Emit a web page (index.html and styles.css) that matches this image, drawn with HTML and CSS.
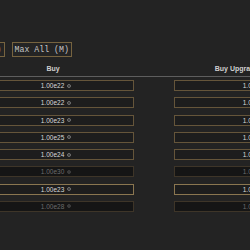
FILE: index.html
```html
<!DOCTYPE html>
<html lang="en">
<head>
  <meta charset="UTF-8">
  <title>Buyables</title>
  <link rel="stylesheet" href="styles.css">
</head>
<body>
  <div class="toolbar">
    <button class="btn first">Toggle (T)</button>
    <button class="btn">Max All (M)</button>
  </div>

  <div class="table">
    <div class="thead">
      <div class="th">Buy</div>
      <div class="th">Buy Upgrades Until Max</div>
    </div>
    <div class="tbody">
      <div class="cell"><span>1.00e22</span><svg class="coin" viewBox="0 0 4 4"><circle cx="2" cy="2" r="1.5"/><circle class="dot" cx="2" cy="2" r="0.5"/></svg></div>
      <div class="cell"><span>1.00e22</span><svg class="coin" viewBox="0 0 4 4"><circle cx="2" cy="2" r="1.5"/><circle class="dot" cx="2" cy="2" r="0.5"/></svg></div>

      <div class="cell"><span>1.00e22</span><svg class="coin" viewBox="0 0 4 4"><circle cx="2" cy="2" r="1.5"/><circle class="dot" cx="2" cy="2" r="0.5"/></svg></div>
      <div class="cell"><span>1.00e22</span><svg class="coin" viewBox="0 0 4 4"><circle cx="2" cy="2" r="1.5"/><circle class="dot" cx="2" cy="2" r="0.5"/></svg></div>

      <div class="cell"><span>1.00e23</span><svg class="coin" viewBox="0 0 4 4"><circle cx="2" cy="2" r="1.5"/><circle class="dot" cx="2" cy="2" r="0.5"/></svg></div>
      <div class="cell"><span>1.00e23</span><svg class="coin" viewBox="0 0 4 4"><circle cx="2" cy="2" r="1.5"/><circle class="dot" cx="2" cy="2" r="0.5"/></svg></div>

      <div class="cell"><span>1.00e25</span><svg class="coin" viewBox="0 0 4 4"><circle cx="2" cy="2" r="1.5"/><circle class="dot" cx="2" cy="2" r="0.5"/></svg></div>
      <div class="cell"><span>1.00e25</span><svg class="coin" viewBox="0 0 4 4"><circle cx="2" cy="2" r="1.5"/><circle class="dot" cx="2" cy="2" r="0.5"/></svg></div>

      <div class="cell"><span>1.00e24</span><svg class="coin" viewBox="0 0 4 4"><circle cx="2" cy="2" r="1.5"/><circle class="dot" cx="2" cy="2" r="0.5"/></svg></div>
      <div class="cell"><span>1.00e24</span><svg class="coin" viewBox="0 0 4 4"><circle cx="2" cy="2" r="1.5"/><circle class="dot" cx="2" cy="2" r="0.5"/></svg></div>

      <div class="cell locked"><span>1.00e30</span><svg class="coin" viewBox="0 0 4 4"><circle cx="2" cy="2" r="1.5"/><circle class="dot" cx="2" cy="2" r="0.5"/></svg></div>
      <div class="cell locked"><span>1.00e30</span><svg class="coin" viewBox="0 0 4 4"><circle cx="2" cy="2" r="1.5"/><circle class="dot" cx="2" cy="2" r="0.5"/></svg></div>

      <div class="cell active"><span>1.00e23</span><svg class="coin" viewBox="0 0 4 4"><circle cx="2" cy="2" r="1.5"/><circle class="dot" cx="2" cy="2" r="0.5"/></svg></div>
      <div class="cell active"><span>1.00e23</span><svg class="coin" viewBox="0 0 4 4"><circle cx="2" cy="2" r="1.5"/><circle class="dot" cx="2" cy="2" r="0.5"/></svg></div>

      <div class="cell locked"><span>1.00e28</span><svg class="coin" viewBox="0 0 4 4"><circle cx="2" cy="2" r="1.5"/><circle class="dot" cx="2" cy="2" r="0.5"/></svg></div>
      <div class="cell locked"><span>1.00e28</span><svg class="coin" viewBox="0 0 4 4"><circle cx="2" cy="2" r="1.5"/><circle class="dot" cx="2" cy="2" r="0.5"/></svg></div>
    </div>
  </div>
</body>
</html>
```

FILE: styles.css
```css
html, body { margin: 0; background: #232323; overflow: hidden; }
body { font-family: "Liberation Sans", Arial, sans-serif; color: #d6d6d6; }

.toolbar { display: flex; gap: 7px; margin: 42px 0 0 -51px; }
.btn { font-family: "Liberation Mono", "Courier New", monospace; font-size: 8.25px; line-height: 13px; height: 15px;
       padding: 0 2px; color: #c6c6c6; background: #242424; border: 1px solid #76633f; border-radius: 0; white-space: nowrap; }

.table { margin-left: -28px; width: 420px; }
.thead { display: grid; grid-template-columns: 162px 162px; column-gap: 40px; padding: 7px 0 3px; border-bottom: 1px solid #5e5e5e; margin-right: -200px; }
.th { font-size: 7px; line-height: 9px; font-weight: bold; text-align: center; color: #cfcfcf; white-space: nowrap; }

.tbody { display: grid; grid-template-columns: 162px 162px; column-gap: 40px; row-gap: 6.25px; padding-top: 3px; }
.cell { height: 11px; box-sizing: border-box; border: 1px solid #65553a; background: #1d1d1d;
        display: flex; align-items: center; justify-content: center; gap: 3px; font-size: 6.5px; line-height: 9px; color: #d8d8d8; }
.cell span { margin-left: 6px; }
.cell.active { border-color: #8a7650; }
.cell.locked { border-color: #3e3528; background: #151515; color: #6c6c6c; }

.coin { width: 4px; height: 4px; }
.coin circle { fill: none; stroke: #8a8a8a; stroke-width: 0.8; }
.coin .dot { fill: #8a8a8a; stroke: none; }
.locked .coin circle { stroke: #4c4c4c; }
.locked .coin .dot { fill: #4c4c4c; }
```
